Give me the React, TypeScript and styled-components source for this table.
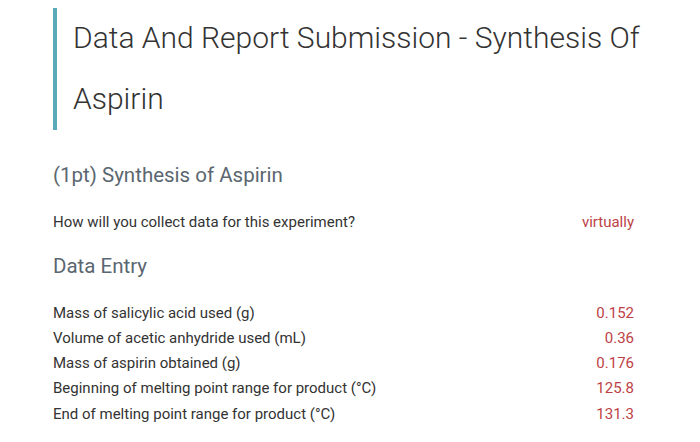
import React from "react";
import styled, { createGlobalStyle } from "styled-components";

const GlobalStyle = createGlobalStyle`
  html, body {
    margin: 0;
    padding: 0;
    background: #ffffff;
  }
  body {
    font-family: Roboto, "Noto Sans", sans-serif;
  }
`;

const rows = [
  { label: "Mass of salicylic acid used (g)", value: "0.152" },
  { label: "Volume of acetic anhydride used (mL)", value: "0.36" },
  { label: "Mass of aspirin obtained (g)", value: "0.176" },
  { label: "Beginning of melting point range for product (°C)", value: "125.8" },
  { label: "End of melting point range for product (°C)", value: "131.3" },
];

export default function App() {
  return (
    <Page>
      <GlobalStyle />
      <TitleBlock>
        <Title>Data And Report Submission - Synthesis Of Aspirin</Title>
      </TitleBlock>
      <Section>
        <SectionTitle>(1pt) Synthesis of Aspirin</SectionTitle>
        <Row>
          <Label>How will you collect data for this experiment?</Label>
          <Value>virtually</Value>
        </Row>
        <SubTitle>Data Entry</SubTitle>
        <Table>
          {rows.map((r) => (
            <DataRow key={r.label}>
              <Label>{r.label}</Label>
              <Value>{r.value}</Value>
            </DataRow>
          ))}
        </Table>
      </Section>
    </Page>
  );
}

const Page = styled.div`
  width: 700px;
  height: 442px;
  padding: 8px 20px 0 53px;
  box-sizing: border-box;
  overflow: hidden;
`;

const TitleBlock = styled.div`
  border-left: 4px solid #5aaab8;
  padding-left: 16px;
`;

const Title = styled.h1`
  margin: 0;
  font-weight: 300;
  font-size: 30px;
  line-height: 61px;
  color: #333;
  position: relative;
  top: -1px;
`;

const Section = styled.div`
  margin-top: 33px;
  padding-right: 46px;
`;

const SectionTitle = styled.h2`
  margin: 0;
  font-weight: 400;
  font-size: 20.5px;
  line-height: 26px;
  color: #5b6770;
  position: relative;
  top: -1px;
`;

const Row = styled.div`
  display: flex;
  justify-content: space-between;
  align-items: center;
  margin-top: 23px;
  height: 20px;
`;

const SubTitle = styled.h3`
  margin: 21px 0 0;
  font-weight: 400;
  font-size: 20.5px;
  line-height: 26px;
  color: #5b6770;
`;

const Table = styled.div`
  display: flex;
  flex-direction: column;
  margin-top: 21px;
`;

const DataRow = styled.div`
  display: flex;
  justify-content: space-between;
  align-items: center;
  height: 25.25px;
`;

const Label = styled.span`
  font-size: 15px;
  color: #333;
`;

const Value = styled.span`
  font-size: 15px;
  color: #bd3f46;
`;
